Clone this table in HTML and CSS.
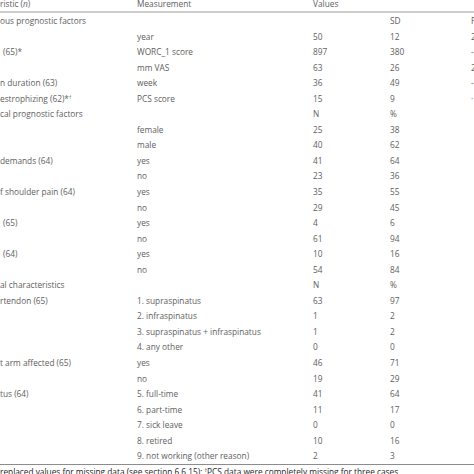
FILE: index.html
```html
<!DOCTYPE html>
<html>
<head>
<meta charset="utf-8">
<link rel="stylesheet" href="styles.css">
</head>
<body>
<div class="sheet">
<table class="tbl">
<colgroup>
<col class="c1"><col class="c2"><col class="c3"><col class="c4"><col class="c5">
</colgroup>
<thead>
<tr><th>ristic (<i>n</i>)</th><th>Measurement</th><th>Values</th><th></th><th></th></tr>
</thead>
<tbody>
<tr><td>ous prognostic factors</td><td></td><td></td><td>SD</td><td>Range</td></tr>
<tr><td></td><td>year</td><td>50</td><td>12</td><td>2</td></tr>
<tr><td><span class="gap">(65)*</span></td><td>WORC_1 score</td><td>897</td><td>380</td><td>-</td></tr>
<tr><td></td><td>mm VAS</td><td>63</td><td>26</td><td>2</td></tr>
<tr><td>n duration (63)</td><td>week</td><td>36</td><td>49</td><td>-</td></tr>
<tr><td>estrophizing (62)*<sup>†</sup></td><td>PCS score</td><td>15</td><td>9</td><td>·</td></tr>
<tr><td>cal prognostic factors</td><td></td><td>N</td><td>%</td><td></td></tr>
<tr><td></td><td>female</td><td>25</td><td>38</td><td></td></tr>
<tr><td></td><td>male</td><td>40</td><td>62</td><td></td></tr>
<tr><td>demands (64)</td><td>yes</td><td>41</td><td>64</td><td></td></tr>
<tr><td></td><td>no</td><td>23</td><td>36</td><td></td></tr>
<tr><td>f shoulder pain (64)</td><td>yes</td><td>35</td><td>55</td><td></td></tr>
<tr><td></td><td>no</td><td>29</td><td>45</td><td></td></tr>
<tr><td><span class="gap">(65)</span></td><td>yes</td><td>4</td><td>6</td><td></td></tr>
<tr><td></td><td>no</td><td>61</td><td>94</td><td></td></tr>
<tr><td><span class="gap">(64)</span></td><td>yes</td><td>10</td><td>16</td><td></td></tr>
<tr><td></td><td>no</td><td>54</td><td>84</td><td></td></tr>
<tr><td>al characteristics</td><td></td><td>N</td><td>%</td><td></td></tr>
<tr><td>rtendon (65)</td><td>1. supraspinatus</td><td>63</td><td>97</td><td></td></tr>
<tr><td></td><td>2. infraspinatus</td><td>1</td><td>2</td><td></td></tr>
<tr><td></td><td>3. supraspinatus + infraspinatus</td><td>1</td><td>2</td><td></td></tr>
<tr><td></td><td>4. any other</td><td>0</td><td>0</td><td></td></tr>
<tr><td>t arm affected (65)</td><td>yes</td><td>46</td><td>71</td><td></td></tr>
<tr><td></td><td>no</td><td>19</td><td>29</td><td></td></tr>
<tr><td>tus (64)</td><td>5. full-time</td><td>41</td><td>64</td><td></td></tr>
<tr><td></td><td>6. part-time</td><td>11</td><td>17</td><td></td></tr>
<tr><td></td><td>7. sick leave</td><td>0</td><td>0</td><td></td></tr>
<tr><td></td><td>8. retired</td><td>10</td><td>16</td><td></td></tr>
<tr><td></td><td>9. not working (other reason)</td><td>2</td><td>3</td><td></td></tr>
</tbody>
</table>
<p class="note">replaced values for missing data (see section 6.6.15); <sup>†</sup>PCS data were completely missing for three cases</p>
</div>
</body>
</html>
```

FILE: styles.css
```css
html, body {
  margin: 0;
  padding: 0;
  background: #fff;
  overflow: hidden;
}
.sheet {
  width: 640px;
  margin-top: -3px;
  font-family: "Open Sans", "Noto Sans", sans-serif;
  font-size: 8.3px;
  color: #5e5e5e;
}
.tbl {
  border-collapse: collapse;
  table-layout: fixed;
  width: 640px;
}
.c1 { width: 137px; }
.c2 { width: 176px; }
.c3 { width: 77px; }
.c4 { width: 81px; }
.c5 { width: 169px; }
.tbl th {
  font-weight: normal;
  text-align: left;
  height: 14px;
  padding: 0;
  line-height: 14px;
  border-bottom: 2px solid #cdcdcd;
  white-space: nowrap;
}
.tbl td {
  height: 15.54px;
  padding: 0;
  line-height: 15.54px;
  white-space: nowrap;
  vertical-align: middle;
}
.tbl tbody tr:last-child td {
  border-bottom: 1px solid #8c8c8c;
}
.gap {
  padding-left: 3px;
}
sup {
  font-size: 5px;
  line-height: 0;
  vertical-align: 3px;
}
.note {
  margin: 0;
  padding-top: 1px;
  line-height: 12px;
  color: #1e1e1e;
  white-space: nowrap;
}
```
